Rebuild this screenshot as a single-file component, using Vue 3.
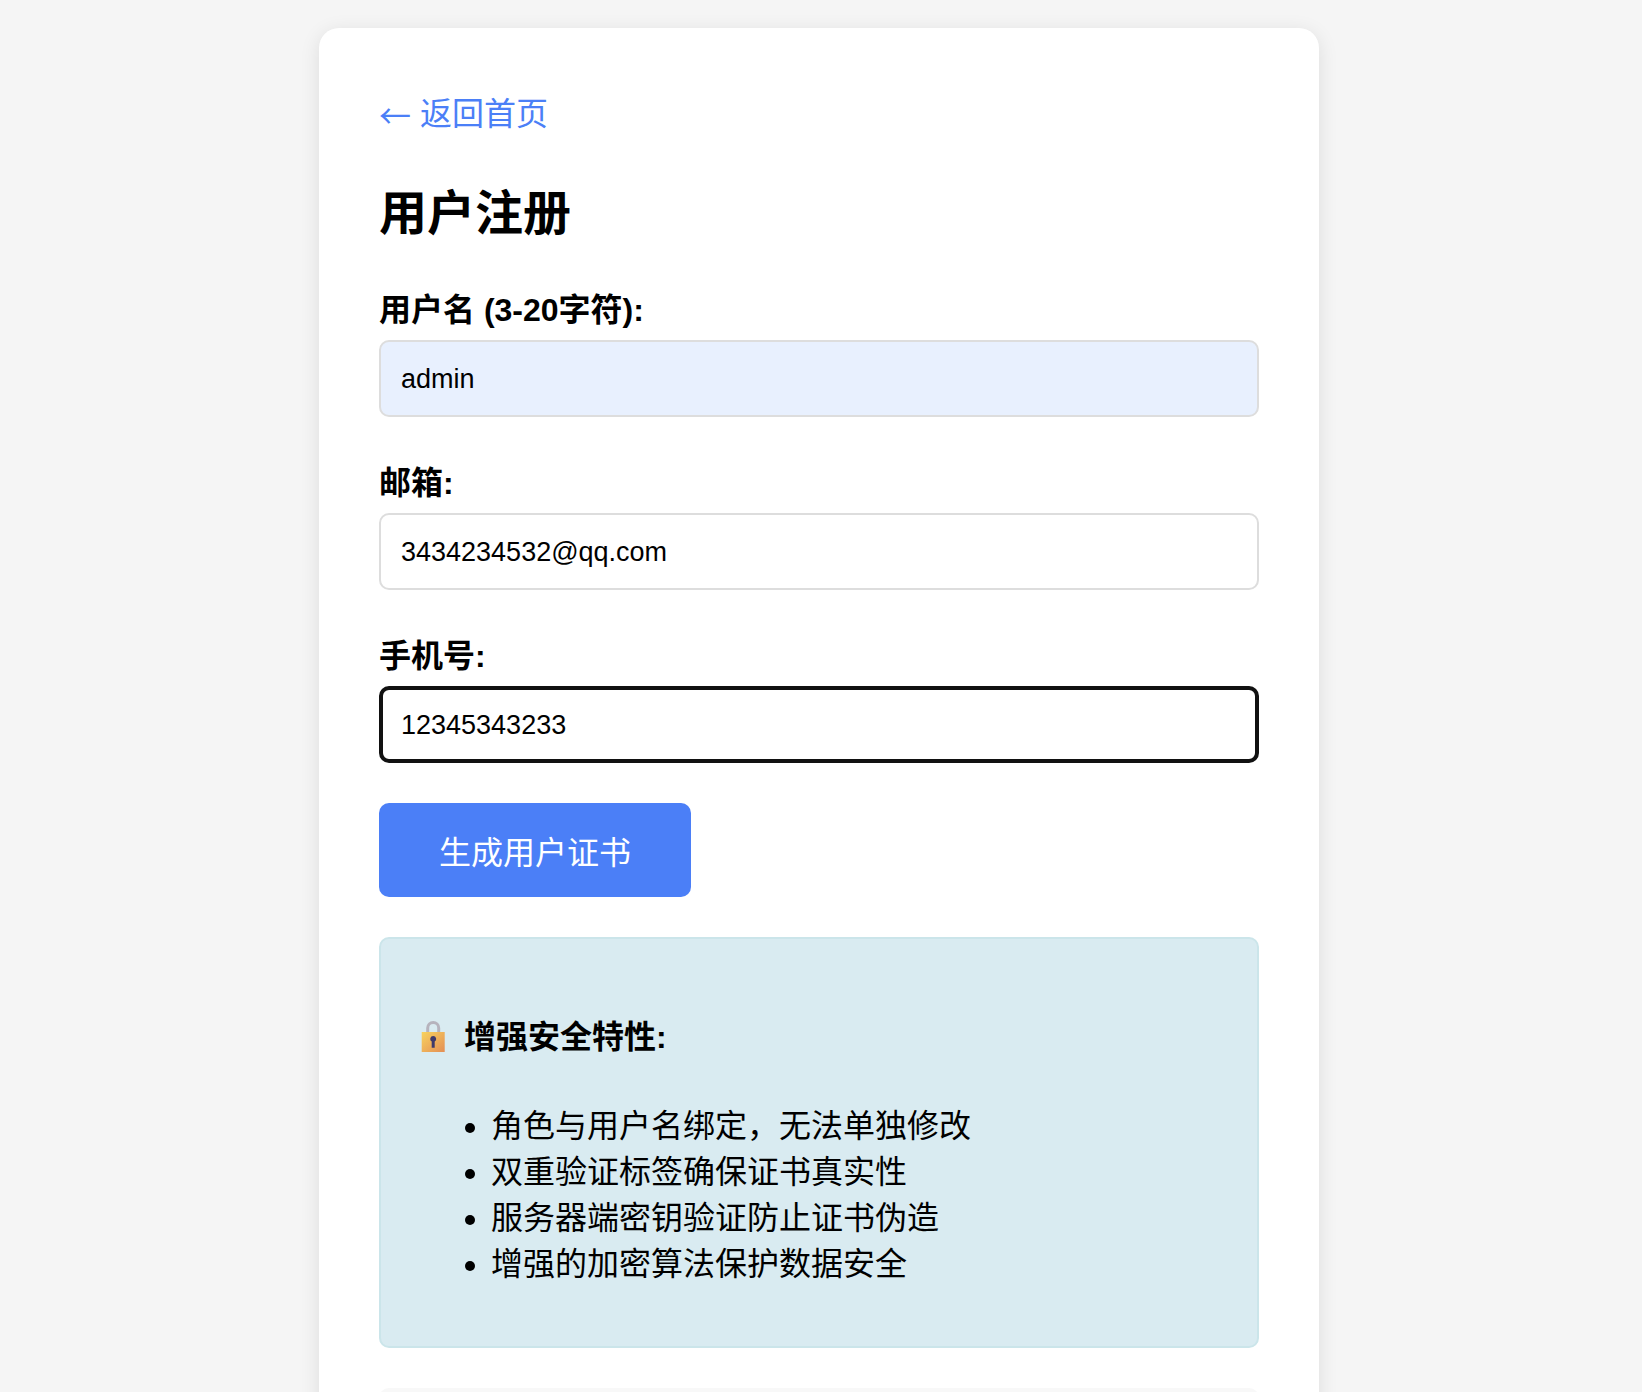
<script setup>
const fields = [
  { label: '用户名 (3-20字符):', value: 'admin', kind: 'filled' },
  { label: '邮箱:', value: '3434234532@qq.com', kind: '' },
  { label: '手机号:', value: '12345343233', kind: 'focused' },
]
const features = [
  '角色与用户名绑定，无法单独修改',
  '双重验证标签确保证书真实性',
  '服务器端密钥验证防止证书伪造',
  '增强的加密算法保护数据安全',
]
</script>

<template>
  <div class="page">
    <main class="card">
      <a class="back" href="#"><span class="arrow">←</span> 返回首页</a>
      <h1 class="title">用户注册</h1>
      <form class="form" @submit.prevent>
        <div v-for="f in fields" :key="f.label" class="field">
          <label class="label">{{ f.label }}</label>
          <input class="input" :class="f.kind" type="text" :value="f.value" />
        </div>
        <button class="submit" type="submit">生成用户证书</button>
      </form>
      <section class="info">
        <p class="info-title">
          <svg class="lock" viewBox="0 0 34 32" width="34" height="32" aria-hidden="true">
            <defs>
              <linearGradient id="lockBody" x1="0" y1="0" x2="1" y2="1">
                <stop offset="0" stop-color="#f8d35e" />
                <stop offset="1" stop-color="#e48e55" />
              </linearGradient>
            </defs>
            <path d="M6.700 12V7a5.500 5.500 0 0 1 11 0v5" fill="none" stroke="#b6b3bd" stroke-width="3" />
            <rect x="0.700" y="11" width="23" height="20" fill="url(#lockBody)" />
            <path d="M12.200 15a3 3 0 0 1 1.500 5.600v6.100h-3v-6.100a3 3 0 0 1 1.500-5.600z" fill="#3f3a6b" />
          </svg>
          <strong>增强安全特性:</strong>
        </p>
        <ul class="list">
          <li v-for="t in features" :key="t">{{ t }}</li>
        </ul>
      </section>
      <section class="next"></section>
    </main>
  </div>
</template>

<style>
html, body { margin: 0; background: #f5f5f5; }
</style>

<style scoped>
.page {
  box-sizing: border-box;
  height: 1392px;
  overflow: hidden;
  padding: 28px 4px 0 0;
  font-family: "Liberation Sans", "Noto Sans CJK SC", sans-serif;
  font-size: 32px;
  color: #000;
}
.card {
  box-sizing: border-box;
  width: 1000px;
  margin: 0 auto;
  padding: 60px;
  background: #fff;
  border-radius: 20px;
  box-shadow: 0 4px 20px rgba(0, 0, 0, 0.1);
}
.back {
  display: block;
  color: #4b7ff7;
  text-decoration: none;
}
.arrow {
  font-family: "Noto Sans CJK SC", sans-serif;
  position: relative;
  top: 3px;
}
.title {
  margin: 40px 0;
  font-size: 48px;
  font-weight: 700;
}
.field { margin-bottom: 40px; }
.label {
  display: block;
  margin-bottom: 10px;
  font-weight: 700;
}
.input {
  box-sizing: border-box;
  display: block;
  width: 100%;
  height: 77px;
  padding: 2px 20px 0;
  border: 2px solid #ddd;
  border-radius: 10px;
  background: #fff;
  color: #000;
  font-family: inherit;
  font-size: 27px;
  outline: none;
}
.input.filled { background: #e8f0fe; }
.input.focused { border: 4px solid #111; padding: 2px 18px 0; }
.submit {
  display: block;
  width: 312px;
  height: 94px;
  border: 0;
  border-radius: 10px;
  background: #4b7ff7;
  color: #fff;
  font-family: inherit;
  font-size: 32px;
}
.info {
  margin-top: 40px;
  padding: 40px;
  background: #d9ebf1;
  border: 2px solid #cbe5ea;
  border-radius: 10px;
}
.info-title { margin: 32px 0 43px; }
.lock { vertical-align: -5px; margin-right: 9px; }
.list { margin: 0 0 22px; padding-left: 70px; }
.next {
  margin-top: 40px;
  height: 120px;
  background: #f8f8f8;
  border-radius: 10px;
}
</style>
